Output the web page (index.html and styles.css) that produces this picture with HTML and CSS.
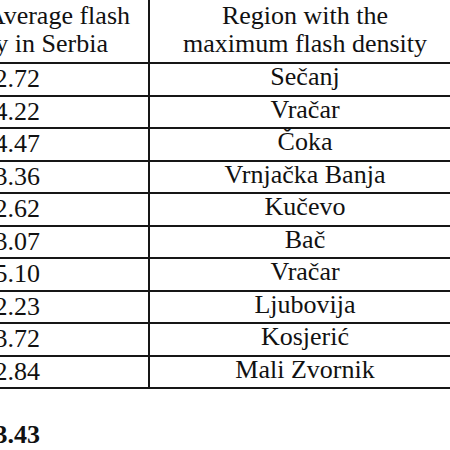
FILE: index.html
```html
<!DOCTYPE html>
<html lang="en">
<head>
<meta charset="utf-8">
<title>Flash density table</title>
<link rel="stylesheet" href="styles.css">
</head>
<body>
<div class="page">
  <table class="flash">
    <colgroup>
      <col class="col-avg">
      <col class="col-region">
    </colgroup>
    <thead>
      <tr>
        <th class="avg">
          <span class="h-line h-line1">Average flash</span>
          <span class="h-line h-line2">density in Serbia</span>
        </th>
        <th class="region">Region with the<br>maximum flash density</th>
      </tr>
    </thead>
    <tbody>
      <tr><td class="avg">2.72</td><td class="region">Sečanj</td></tr>
      <tr><td class="avg">4.22</td><td class="region">Vračar</td></tr>
      <tr><td class="avg">4.47</td><td class="region">Čoka</td></tr>
      <tr><td class="avg">3.36</td><td class="region">Vrnjačka Banja</td></tr>
      <tr><td class="avg">2.62</td><td class="region">Kučevo</td></tr>
      <tr><td class="avg">3.07</td><td class="region">Bač</td></tr>
      <tr><td class="avg">5.10</td><td class="region">Vračar</td></tr>
      <tr><td class="avg">2.23</td><td class="region">Ljubovija</td></tr>
      <tr><td class="avg">3.72</td><td class="region">Kosjerić</td></tr>
      <tr><td class="avg">2.84</td><td class="region">Mali Zvornik</td></tr>
    </tbody>
    <tfoot>
      <tr><td class="avg total">3.43</td><td class="blank"></td></tr>
    </tfoot>
  </table>
</div>
</body>
</html>
```

FILE: styles.css
```css
html, body {
  margin: 0;
  padding: 0;
  background: #fff;
}

.page {
  width: 450px;
  height: 450px;
  overflow: hidden;
  background: #fff;
  font-family: "Liberation Serif", "Times New Roman", serif;
  font-size: 26px;
  color: #111;
}

.flash {
  margin-left: -80px;
  border-collapse: separate;
  border-spacing: 0;
  table-layout: fixed;
  width: 540px;
}

.col-avg { width: 230px; }
.col-region { width: 310px; }

.flash th,
.flash td {
  padding: 0;
  font-weight: normal;
  vertical-align: top;
  white-space: nowrap;
  box-sizing: border-box;
}

.flash thead th {
  padding-top: 2px;
  padding-bottom: 4px;
  line-height: 28px;
  border-bottom: 2px solid #161616;
}

.flash th.avg,
.flash tbody td.avg {
  border-right: 2px solid #161616;
}

.flash .avg {
  text-align: right;
}

.h-line {
  display: block;
}

.h-line1 { padding-right: 18px; }
.h-line2 { padding-right: 40px; }

.flash .region {
  text-align: center;
}

.flash tbody td {
  border-bottom: 2px solid #161616;
}

.flash tbody td.avg {
  line-height: 30.5px;
  padding-right: 108px;
}

.flash tbody td.region {
  line-height: 26.5px;
  padding-bottom: 4px;
}

.flash tfoot td {
  border: none;
}

.flash tfoot td.total {
  padding-top: 32px;
  padding-right: 110px;
  line-height: 28px;
  font-weight: bold;
}
```
